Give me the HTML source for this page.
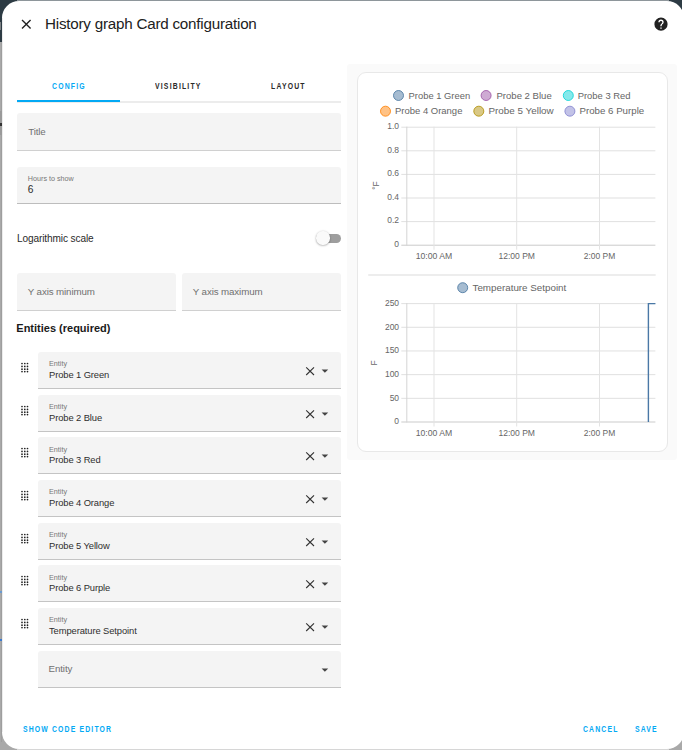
<!DOCTYPE html>
<html><head><meta charset="utf-8">
<style>
*{margin:0;padding:0;box-sizing:border-box}
html,body{width:682px;height:750px;overflow:hidden}
body{position:relative;background:#a9a9a9;font-family:"Liberation Sans",sans-serif;color:#212121}
.bgtop{position:absolute;left:0;top:0;width:682px;height:42px;background:#2d3b44}
.dlg{position:absolute;left:2px;top:1px;width:682px;height:748px;background:#fff;border-radius:17px;overflow:hidden}
.a{position:absolute;white-space:nowrap}
.t{position:absolute;white-space:nowrap;line-height:1}
.field{position:absolute;background:#f4f4f4;border-radius:3px 3px 0 0;border-bottom:1px solid #d0d0d0}
.tab{position:absolute;font-size:8.4px;font-weight:bold;letter-spacing:1.45px;line-height:1;color:#2a2a2a;transform:scaleX(0.82);transform-origin:0 0}
.btn{position:absolute;font-size:8.4px;font-weight:bold;letter-spacing:1.4px;color:#03a9f4;line-height:1;transform:scaleX(0.82);transform-origin:0 0}
.lbl{font-size:7.2px;color:#777}
.val{font-size:10.2px;color:#2a2a2a}
.val2{font-size:9.4px;letter-spacing:-0.1px;color:#2e2e2e}
.ph{font-size:9.75px;letter-spacing:-0.12px;color:#707070}
</style></head><body>
<div class="bgtop"></div>
<div class="a" style="left:1px;top:42px;width:1px;height:700px;background:#9e9e9e"></div>
<div class="a" style="left:17px;top:0;width:652px;height:1px;background:#8e969b"></div>
<div class="a" style="left:17px;top:749px;width:652px;height:1px;background:#d6d6d6"></div>
<div class="a" style="left:0;top:111px;width:2px;height:24px;background:#9a9a9a"></div>
<div class="a" style="left:0;top:123px;width:2px;height:3px;background:#333"></div>
<div class="a" style="left:0;top:591px;width:2px;height:2px;background:#6a9ad0"></div>
<div class="a" style="left:0;top:639px;width:2px;height:2px;background:#3a7ad0"></div>
<div class="a" style="left:0;top:22px;width:1px;height:8px;background:#7d8285"></div>
<div class="dlg">
  <div class="a" style="left:0;top:17px;width:1px;height:714px;background:#ececec"></div>
  <!-- header -->
  <svg class="a" style="left:-2px;top:-1px" width="682" height="60" viewBox="0 0 682 60">
    <path transform="translate(18.140,16.140) scale(0.68)" fill="#212121" d="M19,6.41L17.59,5L12,10.59L6.41,5L5,6.41L10.59,12L5,17.59L6.41,19L12,13.41L17.59,19L19,17.59L13.41,12L19,6.41Z"/>
    <path transform="translate(653.080,16.280) scale(0.66)" fill="#212121" d="M15.07,11.25L14.17,12.17C13.45,12.89 13,13.5 13,15H11V14.5C11,13.39 11.45,12.39 12.17,11.67L13.41,10.41C13.78,10.05 14,9.55 14,9C14,7.89 13.1,7 12,7A2,2 0 0,0 10,9H8A4,4 0 0,1 12,5A4,4 0 0,1 16,9C16,9.88 15.64,10.67 15.07,11.25M13,19H11V17H13M12,2A10,10 0 0,0 2,12A10,10 0 0,0 12,22A10,10 0 0,0 22,12C22,6.47 17.5,2 12,2Z"/>
  </svg>
  <div class="t" style="left:43px;top:15.3px;font-size:15.2px;letter-spacing:-0.22px">History graph Card configuration</div>

  <!-- tabs -->
  <div class="tab" style="left:49.6px;top:80.8px;color:#03a9f4">CONFIG</div>
  <div class="tab" style="left:153.2px;top:80.8px">VISIBILITY</div>
  <div class="tab" style="left:269.3px;top:80.8px">LAYOUT</div>
  <div class="a" style="left:15px;top:100px;width:324px;height:1.5px;background:#ececec"></div>
  <div class="a" style="left:15px;top:99px;width:103px;height:2px;background:#03a9f4"></div>

  <!-- fields (dlg coords: x-2, y-1) -->
  <div class="field" style="left:15px;top:112px;width:324px;height:37.5px"></div>
  <div class="t ph" style="left:26.2px;top:126.3px">Title</div>

  <div class="field" style="left:15px;top:165.5px;width:324px;height:37.5px;border-bottom-color:#bdbdbd"></div>
  <div class="t lbl" style="left:25.8px;top:174px">Hours to show</div>
  <div class="t val" style="left:25.8px;top:183.5px">6</div>

  <div class="t" style="left:15px;top:232.7px;font-size:10.1px;letter-spacing:-0.12px;color:#2a2a2a">Logarithmic scale</div>
  <div class="a" style="left:314px;top:233px;width:25px;height:9px;border-radius:5px;background:#9e9e9e"></div>
  <div class="a" style="left:314.4px;top:230.4px;width:13.2px;height:13.2px;border-radius:50%;background:#fafafa;box-shadow:0 0.6px 2px rgba(0,0,0,0.35)"></div>

  <div class="field" style="left:15px;top:272.4px;width:159.3px;height:37.5px"></div>
  <div class="t ph" style="left:25.8px;top:286.4px">Y axis minimum</div>
  <div class="field" style="left:179.9px;top:272.4px;width:159.1px;height:37.5px"></div>
  <div class="t ph" style="left:190.8px;top:286.4px">Y axis maximum</div>

  <div class="t" style="left:14.3px;top:322px;font-size:11px;font-weight:bold;color:#1a1a1a">Entities (required)</div>
  <div class="field" style="left:36.2px;top:351.00px;width:302.8px;height:37px;border-bottom-color:#c4c4c4"></div>
  <div class="t lbl" style="left:47px;top:359.40px">Entity</div>
  <div class="t val2" style="left:47px;top:368.90px">Probe 1 Green</div>
  <svg class="a" style="left:0;top:351.00px" width="339" height="37"><g fill="#222"><circle cx="20" cy="11.5" r="0.85"/><circle cx="20" cy="14.4" r="0.85"/><circle cx="20" cy="17.2" r="0.85"/><circle cx="20" cy="19.6" r="0.85"/><circle cx="22.8" cy="11.5" r="0.85"/><circle cx="22.8" cy="14.4" r="0.85"/><circle cx="22.8" cy="17.2" r="0.85"/><circle cx="22.8" cy="19.6" r="0.85"/><circle cx="25.5" cy="11.5" r="0.85"/><circle cx="25.5" cy="14.4" r="0.85"/><circle cx="25.5" cy="17.2" r="0.85"/><circle cx="25.5" cy="19.6" r="0.85"/></g><path d="M306.2 15.3 L314 23 M314 15.3 L306.2 23" stroke="#333" stroke-width="1.1" fill="none" transform="translate(-2,0)"/><path d="M319.6 17.4 L326.2 17.4 L322.9 20.7 Z" fill="#444"/></svg>
  <div class="field" style="left:36.2px;top:393.67px;width:302.8px;height:37px;border-bottom-color:#c4c4c4"></div>
  <div class="t lbl" style="left:47px;top:402.07px">Entity</div>
  <div class="t val2" style="left:47px;top:411.57px">Probe 2 Blue</div>
  <svg class="a" style="left:0;top:393.67px" width="339" height="37"><g fill="#222"><circle cx="20" cy="11.5" r="0.85"/><circle cx="20" cy="14.4" r="0.85"/><circle cx="20" cy="17.2" r="0.85"/><circle cx="20" cy="19.6" r="0.85"/><circle cx="22.8" cy="11.5" r="0.85"/><circle cx="22.8" cy="14.4" r="0.85"/><circle cx="22.8" cy="17.2" r="0.85"/><circle cx="22.8" cy="19.6" r="0.85"/><circle cx="25.5" cy="11.5" r="0.85"/><circle cx="25.5" cy="14.4" r="0.85"/><circle cx="25.5" cy="17.2" r="0.85"/><circle cx="25.5" cy="19.6" r="0.85"/></g><path d="M306.2 15.3 L314 23 M314 15.3 L306.2 23" stroke="#333" stroke-width="1.1" fill="none" transform="translate(-2,0)"/><path d="M319.6 17.4 L326.2 17.4 L322.9 20.7 Z" fill="#444"/></svg>
  <div class="field" style="left:36.2px;top:436.34px;width:302.8px;height:37px;border-bottom-color:#c4c4c4"></div>
  <div class="t lbl" style="left:47px;top:444.74px">Entity</div>
  <div class="t val2" style="left:47px;top:454.24px">Probe 3 Red</div>
  <svg class="a" style="left:0;top:436.34px" width="339" height="37"><g fill="#222"><circle cx="20" cy="11.5" r="0.85"/><circle cx="20" cy="14.4" r="0.85"/><circle cx="20" cy="17.2" r="0.85"/><circle cx="20" cy="19.6" r="0.85"/><circle cx="22.8" cy="11.5" r="0.85"/><circle cx="22.8" cy="14.4" r="0.85"/><circle cx="22.8" cy="17.2" r="0.85"/><circle cx="22.8" cy="19.6" r="0.85"/><circle cx="25.5" cy="11.5" r="0.85"/><circle cx="25.5" cy="14.4" r="0.85"/><circle cx="25.5" cy="17.2" r="0.85"/><circle cx="25.5" cy="19.6" r="0.85"/></g><path d="M306.2 15.3 L314 23 M314 15.3 L306.2 23" stroke="#333" stroke-width="1.1" fill="none" transform="translate(-2,0)"/><path d="M319.6 17.4 L326.2 17.4 L322.9 20.7 Z" fill="#444"/></svg>
  <div class="field" style="left:36.2px;top:479.01px;width:302.8px;height:37px;border-bottom-color:#c4c4c4"></div>
  <div class="t lbl" style="left:47px;top:487.41px">Entity</div>
  <div class="t val2" style="left:47px;top:496.91px">Probe 4 Orange</div>
  <svg class="a" style="left:0;top:479.01px" width="339" height="37"><g fill="#222"><circle cx="20" cy="11.5" r="0.85"/><circle cx="20" cy="14.4" r="0.85"/><circle cx="20" cy="17.2" r="0.85"/><circle cx="20" cy="19.6" r="0.85"/><circle cx="22.8" cy="11.5" r="0.85"/><circle cx="22.8" cy="14.4" r="0.85"/><circle cx="22.8" cy="17.2" r="0.85"/><circle cx="22.8" cy="19.6" r="0.85"/><circle cx="25.5" cy="11.5" r="0.85"/><circle cx="25.5" cy="14.4" r="0.85"/><circle cx="25.5" cy="17.2" r="0.85"/><circle cx="25.5" cy="19.6" r="0.85"/></g><path d="M306.2 15.3 L314 23 M314 15.3 L306.2 23" stroke="#333" stroke-width="1.1" fill="none" transform="translate(-2,0)"/><path d="M319.6 17.4 L326.2 17.4 L322.9 20.7 Z" fill="#444"/></svg>
  <div class="field" style="left:36.2px;top:521.68px;width:302.8px;height:37px;border-bottom-color:#c4c4c4"></div>
  <div class="t lbl" style="left:47px;top:530.08px">Entity</div>
  <div class="t val2" style="left:47px;top:539.58px">Probe 5 Yellow</div>
  <svg class="a" style="left:0;top:521.68px" width="339" height="37"><g fill="#222"><circle cx="20" cy="11.5" r="0.85"/><circle cx="20" cy="14.4" r="0.85"/><circle cx="20" cy="17.2" r="0.85"/><circle cx="20" cy="19.6" r="0.85"/><circle cx="22.8" cy="11.5" r="0.85"/><circle cx="22.8" cy="14.4" r="0.85"/><circle cx="22.8" cy="17.2" r="0.85"/><circle cx="22.8" cy="19.6" r="0.85"/><circle cx="25.5" cy="11.5" r="0.85"/><circle cx="25.5" cy="14.4" r="0.85"/><circle cx="25.5" cy="17.2" r="0.85"/><circle cx="25.5" cy="19.6" r="0.85"/></g><path d="M306.2 15.3 L314 23 M314 15.3 L306.2 23" stroke="#333" stroke-width="1.1" fill="none" transform="translate(-2,0)"/><path d="M319.6 17.4 L326.2 17.4 L322.9 20.7 Z" fill="#444"/></svg>
  <div class="field" style="left:36.2px;top:564.35px;width:302.8px;height:37px;border-bottom-color:#c4c4c4"></div>
  <div class="t lbl" style="left:47px;top:572.75px">Entity</div>
  <div class="t val2" style="left:47px;top:582.25px">Probe 6 Purple</div>
  <svg class="a" style="left:0;top:564.35px" width="339" height="37"><g fill="#222"><circle cx="20" cy="11.5" r="0.85"/><circle cx="20" cy="14.4" r="0.85"/><circle cx="20" cy="17.2" r="0.85"/><circle cx="20" cy="19.6" r="0.85"/><circle cx="22.8" cy="11.5" r="0.85"/><circle cx="22.8" cy="14.4" r="0.85"/><circle cx="22.8" cy="17.2" r="0.85"/><circle cx="22.8" cy="19.6" r="0.85"/><circle cx="25.5" cy="11.5" r="0.85"/><circle cx="25.5" cy="14.4" r="0.85"/><circle cx="25.5" cy="17.2" r="0.85"/><circle cx="25.5" cy="19.6" r="0.85"/></g><path d="M306.2 15.3 L314 23 M314 15.3 L306.2 23" stroke="#333" stroke-width="1.1" fill="none" transform="translate(-2,0)"/><path d="M319.6 17.4 L326.2 17.4 L322.9 20.7 Z" fill="#444"/></svg>
  <div class="field" style="left:36.2px;top:607.02px;width:302.8px;height:37px;border-bottom-color:#c4c4c4"></div>
  <div class="t lbl" style="left:47px;top:615.42px">Entity</div>
  <div class="t val2" style="left:47px;top:624.92px">Temperature Setpoint</div>
  <svg class="a" style="left:0;top:607.02px" width="339" height="37"><g fill="#222"><circle cx="20" cy="11.5" r="0.85"/><circle cx="20" cy="14.4" r="0.85"/><circle cx="20" cy="17.2" r="0.85"/><circle cx="20" cy="19.6" r="0.85"/><circle cx="22.8" cy="11.5" r="0.85"/><circle cx="22.8" cy="14.4" r="0.85"/><circle cx="22.8" cy="17.2" r="0.85"/><circle cx="22.8" cy="19.6" r="0.85"/><circle cx="25.5" cy="11.5" r="0.85"/><circle cx="25.5" cy="14.4" r="0.85"/><circle cx="25.5" cy="17.2" r="0.85"/><circle cx="25.5" cy="19.6" r="0.85"/></g><path d="M306.2 15.3 L314 23 M314 15.3 L306.2 23" stroke="#333" stroke-width="1.1" fill="none" transform="translate(-2,0)"/><path d="M319.6 17.4 L326.2 17.4 L322.9 20.7 Z" fill="#444"/></svg>
  <div class="field" style="left:36.2px;top:649.50px;width:302.8px;height:37.5px;border-bottom-color:#c4c4c4"></div>
  <div class="t ph" style="left:46.6px;top:663.30px">Entity</div>
  <svg class="a" style="left:0;top:649.50px" width="339" height="37"><path d="M319.6 17.4 L326.2 17.4 L322.9 20.7 Z" fill="#444"/></svg>

  <div class="btn" style="left:20.7px;top:724.2px">SHOW CODE EDITOR</div>
  <div class="btn" style="left:580.6px;top:724.2px">CANCEL</div>
  <div class="btn" style="left:632.9px;top:724.2px">SAVE</div>
  <div class="a" style="left:344.8px;top:63.4px;width:329.9px;height:395.2px;background:#fafafa;border-radius:3px"></div>
  <div class="a" style="left:354.5px;top:71.2px;width:311.5px;height:380px;background:#fff;border:1px solid #e8e8e8;border-radius:9px"></div>
  <svg class="a" style="left:-2px;top:-1px" width="682" height="750" viewBox="0 0 682 750" font-family="Liberation Sans">
<circle cx="398.5" cy="95.5" r="5" fill="#44739e" fill-opacity="0.48" stroke="#44739e" stroke-opacity="0.8" stroke-width="1"/><text x="408.6" y="98.8" font-size="9.3" fill="#656565" textLength="61.5" lengthAdjust="spacingAndGlyphs">Probe 1 Green</text>
<circle cx="486.1" cy="95.5" r="5" fill="#984ea3" fill-opacity="0.48" stroke="#984ea3" stroke-opacity="0.8" stroke-width="1"/><text x="496.4" y="98.8" font-size="9.3" fill="#656565" textLength="55.4" lengthAdjust="spacingAndGlyphs">Probe 2 Blue</text>
<circle cx="568.3" cy="95.5" r="5" fill="#00d2d5" fill-opacity="0.48" stroke="#00d2d5" stroke-opacity="0.8" stroke-width="1"/><text x="577.7" y="98.8" font-size="9.3" fill="#656565" textLength="52.8" lengthAdjust="spacingAndGlyphs">Probe 3 Red</text>
<circle cx="385.5" cy="111.2" r="5" fill="#ff7f00" fill-opacity="0.48" stroke="#ff7f00" stroke-opacity="0.8" stroke-width="1"/><text x="395.0" y="114.1" font-size="9.3" fill="#656565" textLength="67.4" lengthAdjust="spacingAndGlyphs">Probe 4 Orange</text>
<circle cx="478.8" cy="111.2" r="5" fill="#af8d00" fill-opacity="0.48" stroke="#af8d00" stroke-opacity="0.8" stroke-width="1"/><text x="488.5" y="114.1" font-size="9.3" fill="#656565" textLength="65.2" lengthAdjust="spacingAndGlyphs">Probe 5 Yellow</text>
<circle cx="569.9" cy="111.2" r="5" fill="#7f80cd" fill-opacity="0.48" stroke="#7f80cd" stroke-opacity="0.8" stroke-width="1"/><text x="579.5" y="114.1" font-size="9.3" fill="#656565" textLength="64.7" lengthAdjust="spacingAndGlyphs">Probe 6 Purple</text>
<rect x="401.3" y="126.70" width="254.1" height="1" fill="#e0e0e0"/><rect x="401.3" y="150.30" width="254.1" height="1" fill="#e0e0e0"/><rect x="401.3" y="173.90" width="254.1" height="1" fill="#e0e0e0"/><rect x="401.3" y="197.50" width="254.1" height="1" fill="#e0e0e0"/><rect x="401.3" y="221.10" width="254.1" height="1" fill="#e0e0e0"/><rect x="401.3" y="244.70" width="254.1" height="1" fill="#cbcbcb"/><rect x="406.3" y="126.70" width="1" height="119.00" fill="#d4d4d4"/><rect x="433.5" y="126.70" width="1" height="123.00" fill="#e3e3e3"/><rect x="516.2" y="126.70" width="1" height="123.00" fill="#e3e3e3"/><rect x="599.0" y="126.70" width="1" height="123.00" fill="#e3e3e3"/><text x="399.1" y="128.90" font-size="8.5" fill="#666" text-anchor="end">1.0</text><text x="399.1" y="152.50" font-size="8.5" fill="#666" text-anchor="end">0.8</text><text x="399.1" y="176.10" font-size="8.5" fill="#666" text-anchor="end">0.6</text><text x="399.1" y="199.70" font-size="8.5" fill="#666" text-anchor="end">0.4</text><text x="399.1" y="223.30" font-size="8.5" fill="#666" text-anchor="end">0.2</text><text x="399.1" y="246.90" font-size="8.5" fill="#666" text-anchor="end">0</text><text x="415.70" y="259.4" font-size="8.5" fill="#666" textLength="36.6" lengthAdjust="spacingAndGlyphs">10:00 AM</text><text x="498.40" y="259.4" font-size="8.5" fill="#666" textLength="36.6" lengthAdjust="spacingAndGlyphs">12:00 PM</text><text x="583.75" y="259.4" font-size="8.5" fill="#666" textLength="31.5" lengthAdjust="spacingAndGlyphs">2:00 PM</text><text x="379.5" y="186" font-size="8.5" fill="#666" text-anchor="middle" transform="rotate(-90 379 186)">°F</text>
<rect x="368.2" y="274.5" width="287.5" height="1" fill="#dcdcdc"/>
<circle cx="462.7" cy="287.7" r="5" fill="#44739e" fill-opacity="0.48" stroke="#44739e" stroke-opacity="0.8" stroke-width="1"/><text x="472.5" y="291" font-size="9.3" fill="#656565" textLength="93.8" lengthAdjust="spacingAndGlyphs">Temperature Setpoint</text>
<rect x="401.3" y="303.10" width="254.1" height="1" fill="#e0e0e0"/><rect x="401.3" y="326.78" width="254.1" height="1" fill="#e0e0e0"/><rect x="401.3" y="350.46" width="254.1" height="1" fill="#e0e0e0"/><rect x="401.3" y="374.14" width="254.1" height="1" fill="#e0e0e0"/><rect x="401.3" y="397.82" width="254.1" height="1" fill="#e0e0e0"/><rect x="401.3" y="421.50" width="254.1" height="1" fill="#cbcbcb"/><rect x="406.3" y="303.10" width="1" height="119.40" fill="#d4d4d4"/><rect x="433.5" y="303.10" width="1" height="123.40" fill="#e3e3e3"/><rect x="516.2" y="303.10" width="1" height="123.40" fill="#e3e3e3"/><rect x="599.0" y="303.10" width="1" height="123.40" fill="#e3e3e3"/><text x="399.1" y="305.90" font-size="8.5" fill="#666" text-anchor="end">250</text><text x="399.1" y="329.58" font-size="8.5" fill="#666" text-anchor="end">200</text><text x="399.1" y="353.26" font-size="8.5" fill="#666" text-anchor="end">150</text><text x="399.1" y="376.94" font-size="8.5" fill="#666" text-anchor="end">100</text><text x="399.1" y="400.62" font-size="8.5" fill="#666" text-anchor="end">50</text><text x="399.1" y="424.30" font-size="8.5" fill="#666" text-anchor="end">0</text><text x="415.70" y="436" font-size="8.5" fill="#666" textLength="36.6" lengthAdjust="spacingAndGlyphs">10:00 AM</text><text x="498.40" y="436" font-size="8.5" fill="#666" textLength="36.6" lengthAdjust="spacingAndGlyphs">12:00 PM</text><text x="583.75" y="436" font-size="8.5" fill="#666" textLength="31.5" lengthAdjust="spacingAndGlyphs">2:00 PM</text><text x="376.9" y="363" font-size="8.5" fill="#6a6a6a" text-anchor="middle" transform="rotate(-90 376.9 363)">F</text>
<path d="M648.4 422 L648.4 303.6 L655.4 303.6" stroke="#4a78a6" stroke-width="1.4" fill="none"/>
  </svg>
</div>
</body></html>
